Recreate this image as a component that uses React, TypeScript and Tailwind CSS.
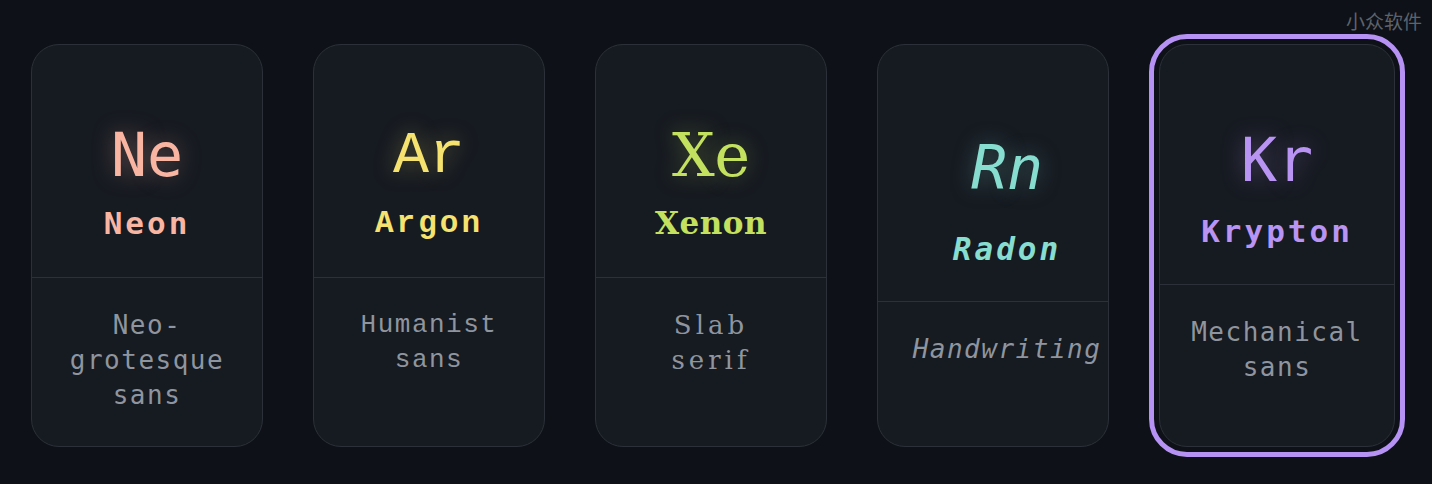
const cards = [
  {
    sym: "Ne",
    name: "Neon",
    desc: ["Neo-", "grotesque", "sans"],
    font: "font-['DejaVu_Sans_Mono',monospace]",
    color: "text-[#f9b5a2]",
    glow: "[text-shadow:0_0_22px_rgba(249,181,162,0.35)]",
    top: "pt-[80px] pb-[36px]",
    gap: "mt-[20px]",
    width: "w-[232px]",
    ring: "",
    labelTrack: "tracking-[3px]",
    descStyle: "tracking-[1.5px]",
  },
  {
    sym: "Ar",
    name: "Argon",
    desc: ["Humanist", "sans"],
    font: "font-['Liberation_Mono',monospace]",
    color: "text-[#f6e26e]",
    glow: "[text-shadow:0_0_22px_rgba(246,226,110,0.35)]",
    top: "pt-[81px] pb-[35px]",
    gap: "mt-[20px]",
    width: "w-[232px]",
    ring: "",
    labelTrack: "tracking-[3px]",
    descStyle: "tracking-[1.5px]",
  },
  {
    sym: "Xe",
    name: "Xenon",
    desc: ["Slab", "serif"],
    font: "font-['DejaVu_Serif',serif]",
    color: "text-[#c3e05f]",
    glow: "[text-shadow:0_0_22px_rgba(195,224,95,0.35)]",
    top: "pt-[80px] pb-[36px]",
    gap: "mt-[20px]",
    width: "w-[232px]",
    ring: "",
    labelTrack: "tracking-[0.5px]",
    descStyle: "tracking-[4px]",
  },
  {
    sym: "Rn",
    name: "Radon",
    desc: ["Handwriting"],
    font: "font-['DejaVu_Sans_Mono',monospace] italic",
    color: "text-[#86ddd0]",
    glow: "[text-shadow:0_0_22px_rgba(134,221,208,0.35)]",
    top: "pt-[93px] pb-[34px] pl-[28px]",
    gap: "mt-[33px]",
    width: "w-[232px]",
    ring: "",
    labelTrack: "tracking-[3px]",
    descStyle: "tracking-[1.5px] pl-[28px]",
  },
  {
    sym: "Kr",
    name: "Krypton",
    desc: ["Mechanical", "sans"],
    font: "font-['DejaVu_Sans_Mono',monospace]",
    color: "text-[#b994f3]",
    glow: "[text-shadow:0_0_22px_rgba(185,148,243,0.35)]",
    top: "pt-[85px] pb-[35px]",
    gap: "mt-[23px]",
    width: "w-[236px]",
    ring: "outline-[5px] outline-[#b692f4] outline-offset-[5px]",
    labelTrack: "tracking-[3px]",
    descStyle: "tracking-[1.5px]",
  },
];

export default function App() {
  return (
    <div className="relative w-[1432px] h-[484px] overflow-hidden bg-[#0e1117]">
      <span className="absolute right-[10px] top-[11px] text-[19px] leading-[19px] text-[#5d636c] font-['Noto_Sans_CJK_SC',sans-serif]">
        小众软件
      </span>

      <div className="flex gap-[50px] pl-[31px] pt-[44px]">
        {cards.map((c) => (
          <div
            key={c.sym}
            className={`${c.width} ${c.ring} ${c.font} h-[403px] flex flex-col rounded-[28px] border-[1.5px] border-[#2c3139] bg-[#161a21]`}
          >
            {/* Symbol + name */}
            <div className={`flex flex-col items-center ${c.top}`}>
              <div className={`text-[60px] leading-[60px] ${c.color} ${c.glow}`}>{c.sym}</div>
              <div className={`${c.gap} text-[31px] leading-[36px] font-bold ${c.labelTrack} ${c.color}`}>{c.name}</div>
            </div>

            {/* Description */}
            <div className={`flex-1 border-t-[1.5px] border-[#2c3139] pt-[30px] text-center text-[26px] leading-[35px] text-[#8f959e] ${c.descStyle}`}>
              {c.desc.map((l) => (
                <div key={l}>{l}</div>
              ))}
            </div>
          </div>
        ))}
      </div>
    </div>
  );
}
